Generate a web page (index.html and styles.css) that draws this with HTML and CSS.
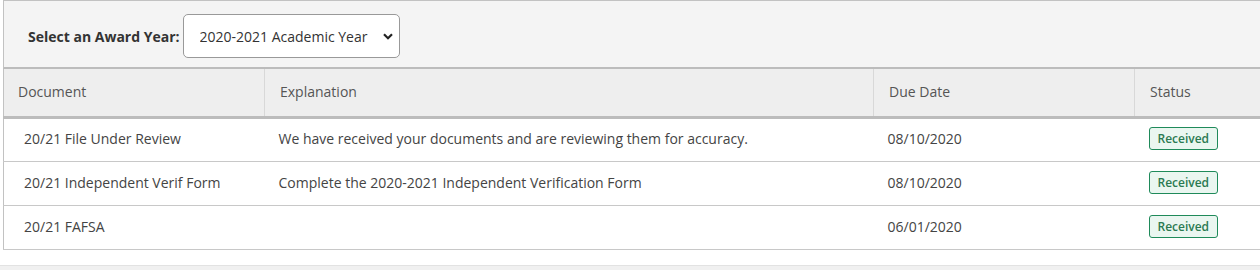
FILE: index.html
```html
<!DOCTYPE html>
<html lang="en">
<head>
<meta charset="UTF-8">
<meta name="viewport" content="width=device-width, initial-scale=1.0">
<title>Document Tracking</title>
<link rel="stylesheet" href="styles.css">
</head>
<body>

<div class="page">
  <div class="year-bar">
    <label class="year-label" for="awardYear">Select an Award Year:</label>
    <div class="select-wrap">
      <select id="awardYear" class="year-select">
        <option>2020-2021 Academic Year</option>
        <option>2019-2020 Academic Year</option>
      </select>
      <svg class="select-arrow" width="10" height="7" viewBox="0 0 10 7">
        <path d="M1 1.2 L5 5.2 L9 1.2" fill="none" stroke="#222" stroke-width="2.2"/>
      </svg>
    </div>
  </div>

  <table class="docs">
    <thead>
      <tr>
        <th class="col-doc">Document</th>
        <th class="col-exp">Explanation</th>
        <th class="col-due">Due Date</th>
        <th class="col-status">Status</th>
      </tr>
    </thead>
    <tbody>
      <tr>
        <td class="doc-name">20/21 File Under Review</td>
        <td>We have received your documents and are reviewing them for accuracy.</td>
        <td>08/10/2020</td>
        <td><span class="badge">Received</span></td>
      </tr>
      <tr>
        <td class="doc-name">20/21 Independent Verif Form</td>
        <td>Complete the 2020-2021 Independent Verification Form</td>
        <td>08/10/2020</td>
        <td><span class="badge">Received</span></td>
      </tr>
      <tr>
        <td class="doc-name">20/21 FAFSA</td>
        <td></td>
        <td>06/01/2020</td>
        <td><span class="badge">Received</span></td>
      </tr>
    </tbody>
  </table>
</div>

<div class="footer-band"></div>

</body>
</html>
```

FILE: styles.css
```css
body {
  font-family: "Open Sans", Arial, sans-serif;
  font-size: 14px;
  color: #444;
  background-color: #fff;
  margin: 0;
  padding: 0;
}

.page {
  margin-left: 3px;
}

.year-bar {
  display: flex;
  align-items: center;
  height: 62px;
  padding: 4px 0 0 24px;
  background-color: #f4f4f4;
  border-top: 1px solid #c2c2c2;
  border-left: 1px solid #c2c2c2;
  border-bottom: 2px solid #bcbcbc;
}

.year-label {
  font-weight: 700;
  color: #333;
  margin-right: 3px;
}

.select-wrap {
  position: relative;
}

.year-select {
  appearance: none;
  -webkit-appearance: none;
  width: 217px;
  height: 44px;
  padding: 0 0 0 16px;
  font-family: "Open Sans", Arial, sans-serif;
  font-size: 14px;
  color: #333;
  background-color: #fff;
  border: 1px solid #999;
  border-radius: 5px;
}

.select-arrow {
  position: absolute;
  right: 7px;
  top: 19px;
  pointer-events: none;
}

.docs {
  width: 100%;
  table-layout: fixed;
  border-collapse: collapse;
  border-left: 1px solid #c2c2c2;
}

.docs th,
.docs td {
  box-sizing: border-box;
}

.docs th {
  height: 48px;
  padding: 0 15px 2px;
  text-align: left;
  font-weight: 400;
  color: #555;
  background-color: #eee;
  border-left: 1px solid #d8d8d8;
  border-bottom: 3px solid #bcbcbc;
}

.docs th:first-child {
  border-left: none;
  padding-left: 14px;
}

.col-doc { width: 261px; }
.col-exp { width: 609px; }
.col-due { width: 261px; }

.docs td {
  height: 44px;
  padding: 0 14px 2px;
  color: #444;
  border-bottom: 1px solid #c8c8c8;
}

.docs td.doc-name {
  padding-left: 20px;
}

.badge {
  display: inline-block;
  padding: 2px 8px 2px;
  font-size: 12px;
  font-weight: 600;
  color: #2b7a52;
  background-color: #eaf6f0;
  border: 1px solid #1f8a5a;
  border-radius: 3px;
}

.footer-band {
  margin-top: 15px;
  height: 4px;
  background-color: #f0f0f0;
  border-top: 1px solid #e2e2e2;
}
```
